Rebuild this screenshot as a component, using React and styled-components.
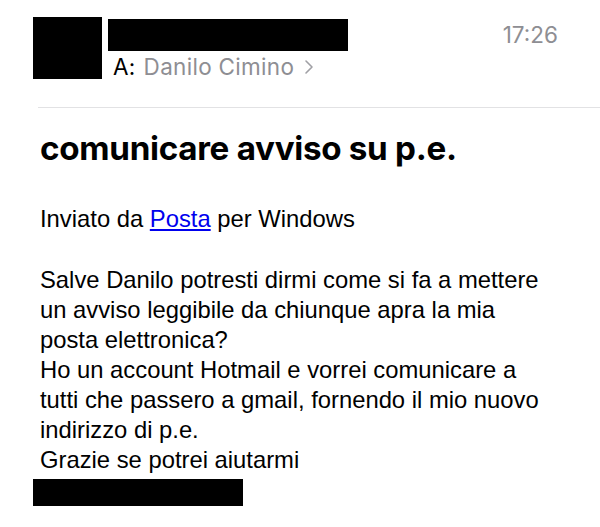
import React from "react";
import styled, { createGlobalStyle } from "styled-components";

const GlobalStyle = createGlobalStyle`
    html, body {
        margin: 0;
        padding: 0;
        background: #ffffff;
    }
    body {
        font-family: "Liberation Sans", Arial, sans-serif;
        color: #000000;
    }
`;

const Page = styled.div`
    width: 600px;
    height: 527px;
    overflow: hidden;
    background: #ffffff;
`;

const Header = styled.div`
    display: flex;
    align-items: flex-start;
    padding: 17px 42px 0 33px;
`;

const Avatar = styled.div`
    width: 69px;
    height: 62px;
    background: #000;
    flex-shrink: 0;
`;

const Meta = styled.div`
    display: flex;
    flex-direction: column;
    margin-left: 6px;
`;

const Redacted = styled.div`
    width: ${(p) => p.w}px;
    height: ${(p) => p.h}px;
    background: #000;
`;

const Recipient = styled.div`
    display: flex;
    align-items: center;
    margin-top: 3px;
    font-family: Inter, "Liberation Sans", sans-serif;
    font-size: 22.5px;
    line-height: 26px;
    letter-spacing: 0.3px;
    color: #8e8e93;
    padding-left: 5px;
`;

const Label = styled.span`
    color: #000;
    margin-right: 8px;
`;

const Chevron = styled.svg`
    margin-left: 10px;
    width: 10px;
    height: 16px;
`;

const Time = styled.div`
    margin-left: auto;
    margin-top: 5px;
    font-family: Inter, "Liberation Sans", sans-serif;
    font-size: 22.5px;
    line-height: 26px;
    color: #8e8e93;
`;

const Divider = styled.div`
    margin: 27px 0 0 38px;
    height: 1px;
    background: #e2e2e4;
`;

const Content = styled.div`
    padding: 20px 0 0 40px;
`;

const Subject = styled.h1`
    margin: 0;
    font-family: Inter, "Liberation Sans", sans-serif;
    font-weight: 700;
    font-size: 33.2px;
    line-height: 40px;
    letter-spacing: -0.3px;
`;

const Body = styled.div`
    width: 515px;
    font-size: 23.8px;
    line-height: 30px;
`;

const Paragraph = styled.p`
    margin: 0;
    margin-top: ${(p) => p.gap || 0}px;
`;

const Link = styled.a`
    color: #0000ee;
    text-decoration: underline;
`;

const Signature = styled(Redacted)`
    margin: 4px 0 0 -7px;
`;

function App() {
    return (
        <Page>
            <GlobalStyle />
            <Header>
                <Avatar />
                <Meta>
                    <Redacted w={240} h={32} style={{ marginTop: 2 }} />
                    <Recipient>
                        <Label>A:</Label>
                        Danilo Cimino
                        <Chevron viewBox="0 0 10 16">
                            <polyline points="2,2 8,8 2,14" fill="none" stroke="#a0a0a5" strokeWidth="1.6" strokeLinecap="round" strokeLinejoin="round" />
                        </Chevron>
                    </Recipient>
                </Meta>
                <Time>17:26</Time>
            </Header>
            <Divider />
            <Content>
                <Subject>comunicare avviso su p.e.</Subject>
                <Body>
                    <Paragraph gap={36}>
                        Inviato da <Link href="#">Posta</Link> per Windows
                    </Paragraph>
                    <Paragraph gap={31}>
                        Salve Danilo potresti dirmi come si fa a mettere un avviso leggibile da chiunque apra la mia posta elettronica?
                    </Paragraph>
                    <Paragraph>
                        Ho un account Hotmail e vorrei comunicare a tutti che passero a gmail, fornendo il mio nuovo indirizzo di p.e.
                    </Paragraph>
                    <Paragraph>Grazie se potrei aiutarmi</Paragraph>
                    <Signature w={210} h={27} />
                </Body>
            </Content>
        </Page>
    );
}

export default App;
